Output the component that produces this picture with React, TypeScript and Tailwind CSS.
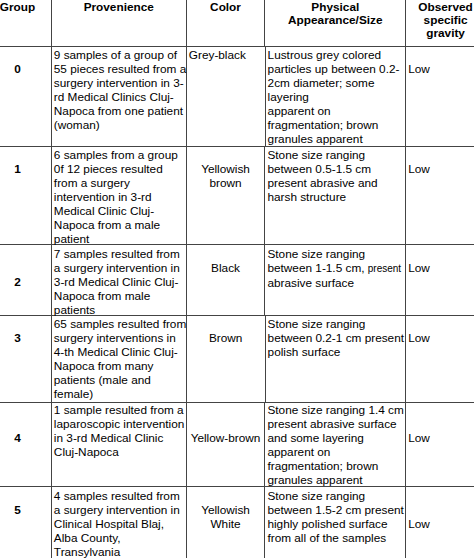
import React from 'react'

type Row = {
  group: string
  height: string
  pt: string
  groupPt: string
  provenience: React.ReactNode[]
  color: string[]
  colorPt: string
  colorLeft?: boolean
  physical: React.ReactNode[]
  gravityPt: string
}

// column widths, first column is partly cut off on the left
const W = ['w-[68px]', 'w-[135px]', 'w-[79px]', 'w-[141px]', 'w-[80px]']

const rows: Row[] = [
  {
    group: '0',
    height: 'h-[100px]',
    pt: 'pt-[1px]',
    groupPt: 'pt-[15px]',
    provenience: [
      '9 samples of a group of',
      '55 pieces resulted from a',
      'surgery intervention in 3-',
      'rd Medical Clinics Cluj-',
      'Napoca from one patient',
      '(woman)',
    ],
    color: ['Grey-black'],
    colorPt: 'pt-[1px]',
    colorLeft: true,
    physical: [
      'Lustrous grey colored',
      'particles up between 0.2-',
      '2cm diameter; some',
      'layering',
      'apparent on',
      'fragmentation; brown',
      'granules apparent',
    ],
    gravityPt: 'pt-[15px]',
  },
  {
    group: '1',
    height: 'h-[98px]',
    pt: 'pt-[1px]',
    groupPt: 'pt-[15px]',
    provenience: [
      '6 samples from a group',
      '0f 12 pieces resulted',
      'from a surgery',
      'intervention in 3-rd',
      'Medical Clinic Cluj-',
      'Napoca from a male',
      'patient',
    ],
    color: ['Yellowish', 'brown'],
    colorPt: 'pt-[15px]',
    physical: ['Stone size ranging', 'between 0.5-1.5 cm', 'present abrasive and', 'harsh structure'],
    gravityPt: 'pt-[15px]',
  },
  {
    group: '2',
    height: 'h-[71px]',
    pt: 'pt-[2px]',
    groupPt: 'pt-[30px]',
    provenience: [
      '7 samples resulted from',
      'a surgery intervention in',
      '3-rd Medical Clinic Cluj-',
      'Napoca from male',
      'patients',
    ],
    color: ['Black'],
    colorPt: 'pt-[16px]',
    physical: [
      'Stone size ranging',
      <>
        between 1-1.5 cm, <span className="text-[10px]">present</span>
      </>,
      'abrasive surface',
    ],
    gravityPt: 'pt-[16px]',
  },
  {
    group: '3',
    height: 'h-[87px]',
    pt: 'pt-[1px]',
    groupPt: 'pt-[15px]',
    provenience: [
      '65 samples resulted from',
      'surgery interventions in',
      '4-th Medical Clinic Cluj-',
      'Napoca from many',
      'patients (male and',
      'female)',
    ],
    color: ['Brown'],
    colorPt: 'pt-[15px]',
    physical: ['Stone size ranging', 'between 0.2-1 cm present', 'polish surface'],
    gravityPt: 'pt-[15px]',
  },
  {
    group: '4',
    height: 'h-[84px]',
    pt: 'pt-0',
    groupPt: 'pt-[28px]',
    provenience: [
      '1 sample resulted from a',
      'laparoscopic intervention',
      'in 3-rd Medical Clinic',
      'Cluj-Napoca',
    ],
    color: ['Yellow-brown'],
    colorPt: 'pt-[28px]',
    physical: [
      'Stone size ranging 1.4 cm',
      'present abrasive surface',
      'and some layering',
      'apparent on',
      'fragmentation; brown',
      'granules apparent',
    ],
    gravityPt: 'pt-[28px]',
  },
  {
    group: '5',
    height: 'h-[80px]',
    pt: 'pt-[2px]',
    groupPt: 'pt-[16px]',
    provenience: [
      '4 samples resulted from',
      'a surgery intervention in',
      'Clinical Hospital Blaj,',
      'Alba County,',
      'Transylvania',
    ],
    color: ['Yellowish', 'White'],
    colorPt: 'pt-[16px]',
    physical: [
      'Stone size ranging',
      'between 1.5-2 cm present',
      'highly polished surface',
      'from all of the samples',
    ],
    gravityPt: 'pt-[30px]',
  },
]

function Lines({ lines }: { lines: React.ReactNode[] }) {
  return (
    <>
      {lines.map((l, i) => (
        <div key={i}>{l}</div>
      ))}
    </>
  )
}

export default function App() {
  return (
    <div className="w-[474px] h-[558px] overflow-hidden bg-white">
      <div
        className="ml-[-17px] mt-[-1px] w-[503px] border-t border-l border-[#444] text-black text-[11.8px] leading-[14px] whitespace-nowrap"
        style={{ fontFamily: '"Liberation Sans", Arial, sans-serif' }}
      >
        {/* Header */}
        <div className="flex h-[47px] border-b border-[#444] font-bold leading-[13px] text-center">
          <div className={`${W[0]} border-r border-[#444] pt-[1px]`}>Group</div>
          <div className={`${W[1]} border-r border-[#444] pt-[1px]`}>Provenience</div>
          <div className={`${W[2]} border-r border-[#444] pt-[1px]`}>Color</div>
          <div className={`${W[3]} border-r border-[#444] pt-[1px]`}>
            Physical
            <br />
            Appearance/Size
          </div>
          <div className={`${W[4]} border-r border-[#444] pt-[1px]`}>
            Observed
            <br />
            specific
            <br />
            gravity
          </div>
        </div>

        {rows.map(r => (
          <div key={r.group} className={`flex ${r.height} border-b border-[#444]`}>
            <div className={`${W[0]} border-r border-[#444] text-center font-bold ${r.groupPt}`}>{r.group}</div>
            <div className={`${W[1]} border-r border-[#444] pl-[2px] ${r.pt}`}>
              <Lines lines={r.provenience} />
            </div>
            <div
              className={`${W[2]} border-r border-[#444] ${r.colorLeft ? 'text-left pl-[2px]' : 'text-center'} ${r.colorPt}`}
            >
              <Lines lines={r.color} />
            </div>
            <div className={`${W[3]} border-r border-[#444] pl-[2px] ${r.pt}`}>
              <Lines lines={r.physical} />
            </div>
            <div className={`${W[4]} border-r border-[#444] pl-[2px] ${r.gravityPt}`}>Low</div>
          </div>
        ))}
      </div>
    </div>
  )
}
